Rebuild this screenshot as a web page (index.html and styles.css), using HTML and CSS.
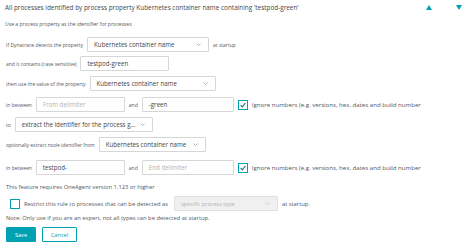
FILE: index.html
```html
<!DOCTYPE html>
<html>
<head>
<meta charset="utf-8">
<link rel="stylesheet" href="styles.css">
</head>
<body>
<div class="page">
  <div class="titlebar">
    <div class="title">All processes identified by process property Kubernetes container name containing 'testpod-green'</div>
    <div class="arrows">
      <svg class="arrow" width="6" height="5" viewBox="0 0 6 5"><polygon points="3,0 6,5 0,5" fill="#00a1b2"/></svg>
      <svg class="arrow" width="6" height="5" viewBox="0 0 6 5"><polygon points="0,0 6,0 3,5" fill="#00a1b2"/></svg>
    </div>
  </div>
  <div class="subtitle">Use a process property as the identifier for processes</div>

  <div class="row r1">
    <span class="lbl">If Dynatrace detects the property</span>
    <div class="box sel w122"><span>Kubernetes container name</span><svg class="chev" width="5" height="3" viewBox="0 0 5 3"><polyline points="0.5,0.5 2.5,2.5 4.5,0.5" fill="none" stroke="#8aa0b4" stroke-width="0.8"/></svg></div>
    <span class="lbl">at startup</span>
  </div>

  <div class="row r2">
    <span class="lbl">and it contains (case sensitive)</span>
    <div class="box w89"><span>testpod-green</span></div>
  </div>

  <div class="row r3">
    <span class="lbl">then use the value of the property</span>
    <div class="box sel w126"><span>Kubernetes container name</span><svg class="chev" width="5" height="3" viewBox="0 0 5 3"><polyline points="0.5,0.5 2.5,2.5 4.5,0.5" fill="none" stroke="#8aa0b4" stroke-width="0.8"/></svg></div>
  </div>

  <div class="row r4">
    <span class="lbl">in between</span>
    <div class="box w89"><span class="ph">From delimiter</span></div>
    <span class="lbl">and</span>
    <div class="box w92"><span>-green</span></div>
    <svg class="cb" width="10" height="10" viewBox="0 0 10 10"><rect x="0.5" y="0.5" width="9" height="9" fill="#fff" stroke="#00a1b2"/><polyline points="2.6,5.2 4.3,6.9 7.4,3" fill="none" stroke="#1b6f8f" stroke-width="1.2"/></svg>
    <span class="txt ign">Ignore numbers (e.g. versions, hex, dates and build number</span>
  </div>

  <div class="row r5">
    <span class="lbl">to</span>
    <div class="box sel w138"><span>extract the identifier for the process g...</span><svg class="chev" width="5" height="3" viewBox="0 0 5 3"><polyline points="0.5,0.5 2.5,2.5 4.5,0.5" fill="none" stroke="#8aa0b4" stroke-width="0.8"/></svg></div>
  </div>

  <div class="row r6">
    <span class="lbl">optionally extract node identifier from</span>
    <div class="box sel w107"><span>Kubernetes container name</span><svg class="chev" width="5" height="3" viewBox="0 0 5 3"><polyline points="0.5,0.5 2.5,2.5 4.5,0.5" fill="none" stroke="#8aa0b4" stroke-width="0.8"/></svg></div>
  </div>

  <div class="row r7">
    <span class="lbl">in between</span>
    <div class="box w89"><span>testpod-</span></div>
    <span class="lbl">and</span>
    <div class="box w92"><span class="ph">End delimiter</span></div>
    <svg class="cb" width="10" height="10" viewBox="0 0 10 10"><rect x="0.5" y="0.5" width="9" height="9" fill="#fff" stroke="#00a1b2"/><polyline points="2.6,5.2 4.3,6.9 7.4,3" fill="none" stroke="#1b6f8f" stroke-width="1.2"/></svg>
    <span class="txt ign">Ignore numbers (e.g. versions, hex, dates and build number</span>
  </div>

  <div class="feature">This feature requires OneAgent version 1.123 or higher</div>

  <div class="row restrict">
    <svg class="cb2" width="10" height="10" viewBox="0 0 10 10"><rect x="0.5" y="0.5" width="9" height="9" fill="#fff" stroke="#00a1b2"/></svg>
    <span class="txt">Restrict this rule to processes that can be detected as</span>
    <div class="box sel dis w104"><span>specific process type</span><svg class="chev" width="5" height="3" viewBox="0 0 5 3"><polyline points="0.5,0.5 2.5,2.5 4.5,0.5" fill="none" stroke="#c4c4c4" stroke-width="0.8"/></svg></div>
    <span class="txt">at startup.</span>
  </div>

  <div class="note">Note: Only use if you are an expert, not all types can be detected at startup.</div>

  <div class="buttons">
    <button class="btn save">Save</button>
    <button class="btn cancel">Cancel</button>
  </div>
</div>
</body>
</html>
```
FILE: styles.css
```css
html, body {
  margin: 0;
  padding: 0;
  background: #fff;
}
body {
  font-family: "Open Sans", "Liberation Sans", sans-serif;
  color: #555759;
  width: 474px;
  height: 247px;
  overflow: hidden;
}
.page {
  padding: 0 5px 0 6px;
  display: flex;
  flex-direction: column;
}
.titlebar {
  height: 14px;
  display: flex;
  align-items: center;
  justify-content: space-between;
}
.title {
  font-size: 6.4px;
  color: #454646;
  margin-left: -1px;
}
.arrows {
  display: flex;
  gap: 24px;
  margin-right: 7px;
  align-items: center;
}
.arrow { display: block; }
.subtitle {
  font-size: 5.1px;
  height: 10px;
  line-height: 10px;
  margin-top: 5px;
  margin-left: -1px;
}
.row {
  display: flex;
  align-items: center;
  height: 15px;
  gap: 4px;
  white-space: nowrap;
}
.r1 { margin-top: 8px; }
.r2 { margin-top: 4px; }
.r3 { margin-top: 5px; }
.r4 { margin-top: 6px; }
.r5 { margin-top: 5px; }
.r6 { margin-top: 5px; }
.r7 { margin-top: 8px; }
.lbl {
  font-size: 5px;
  color: #555759;
}
.txt {
  font-size: 5.8px;
  color: #555759;
}
.ign {
  font-size: 6.1px;
}
.box {
  box-sizing: border-box;
  height: 15px;
  border: 1px solid #d6d6d6;
  border-radius: 1px;
  background: #fff;
  display: flex;
  align-items: center;
  justify-content: space-between;
  padding: 0 8px 0 6px;
  font-size: 6.2px;
  color: #454646;
  flex: none;
}
.box .ph { color: #b3b3b3; }
.sel { padding-right: 7px; }
.chev { display: block; flex: none; }
.dis {
  background: #f0f0f0;
  border-color: #e0e0e0;
  color: #b0b0b0;
  font-size: 5.6px;
  margin-left: 2px;
}
.w122 { width: 122px; margin-left: 0; }
.w89 { width: 89px; }
.w126 { width: 126px; }
.w92 { width: 92px; }
.w138 { width: 138px; }
.w107 { width: 107px; }
.w104 { width: 104px; }
.cb { flex: none; display: block; margin-left: 0; }
.cb2 { flex: none; display: block; margin-left: 4px; margin-right: 0; }
.feature {
  font-size: 5.8px;
  height: 10px;
  line-height: 10px;
  margin-top: 7px;
}
.restrict { margin-top: 4px; }
.note {
  font-size: 5.8px;
  height: 10px;
  line-height: 10px;
  margin-top: 2px;
}
.buttons {
  display: flex;
  gap: 6px;
  margin-top: 4px;
}
.btn {
  box-sizing: border-box;
  height: 15px;
  font-family: "Open Sans", "Liberation Sans", sans-serif;
  font-size: 5.6px;
  border-radius: 1px;
  padding: 0;
  display: flex;
  align-items: center;
  justify-content: center;
}
.save {
  width: 30px;
  background: #00a1b2;
  border: 1px solid #00a1b2;
  color: #fff;
}
.cancel {
  width: 35px;
  background: #fff;
  border: 1px solid #00a1b2;
  color: #00a1b2;
}
```
